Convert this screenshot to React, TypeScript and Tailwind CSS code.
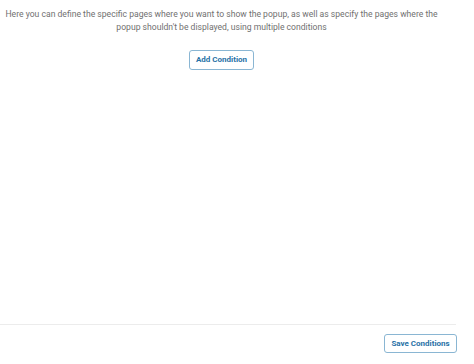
export default function App() {
  return (
    <div className="flex h-[364px] w-[474px] flex-col bg-white font-['Roboto',sans-serif]">
      <div className="flex-1 w-[443px] pt-[8px]">
        <p className="text-center text-[8.6px] leading-[13px] text-[#707070]">
          Here you can define the specific pages where you want to show the popup, as well as specify the pages where the
          <br />
          popup shouldn't be displayed, using multiple conditions
        </p>
        <div className="mt-[16px] flex justify-center">
          <button className="h-[20px] w-[65px] rounded-[3px] border border-[#8ab6d3] text-[8px] font-bold text-[#2871a6]">
            Add Condition
          </button>
        </div>
      </div>
      <div className="h-px w-[456px] bg-[#ececec]" />
      <div className="flex h-[39px] w-[457px] items-start justify-end pt-[9px]">
        <button className="h-[19px] w-[73px] rounded-[3px] border border-[#8ab6d3] text-[8px] font-bold text-[#2871a6]">
          Save Conditions
        </button>
      </div>
    </div>
  );
}
